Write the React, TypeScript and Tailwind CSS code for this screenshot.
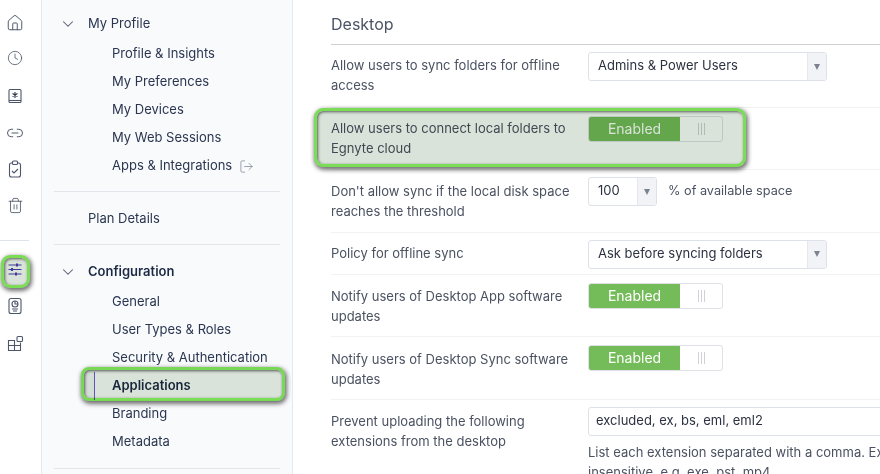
import { ChevronDown, Clock, House, Link2, LogOut, Trash2 } from "lucide-react";
import type { ReactNode } from "react";

const profileLinks = ["Profile & Insights", "My Preferences", "My Devices", "My Web Sessions"];
const configLinks = ["General", "User Types & Roles", "Security & Authentication"];

function IconCell({ children }: { children: ReactNode }) {
  return <div className="flex h-[36.6px] w-[30px] items-center justify-center text-[#4c576b]">{children}</div>;
}

function BookIcon() {
  return (
    <svg width="16" height="16" viewBox="0 0 16 16" fill="none" stroke="currentColor" strokeWidth="1.1">
      <rect x="2" y="1.5" width="12" height="13" rx="1" />
      <path d="M2 12.5h12" />
      <path d="M8 4v6M5.5 5.5l5 3M10.5 5.5l-5 3" stroke="#2a3448" />
    </svg>
  );
}

function ClipboardIcon() {
  return (
    <svg width="16" height="18" viewBox="0 0 16 18" fill="none" stroke="currentColor" strokeWidth="1.1">
      <rect x="2.5" y="3" width="11" height="14" rx="2" />
      <rect x="5.5" y="1" width="5" height="3.5" rx="1" fill="white" />
      <path d="M5 11l2 2 4-4" />
    </svg>
  );
}

function SlidersIcon() {
  return (
    <svg width="14" height="13" viewBox="0 0 14 13" fill="none" stroke="#4f3fb8" strokeWidth="1.1">
      <path d="M0.5 2h13M0.5 6.5h13M0.5 11h13" />
      <path d="M9 0.5v3M4 5v3M8 9.5v3" strokeWidth="2" />
    </svg>
  );
}

function DriveIcon() {
  return (
    <svg width="16" height="18" viewBox="0 0 16 18" fill="none" stroke="currentColor" strokeWidth="1.1">
      <rect x="2" y="1.5" width="12" height="15" rx="2" />
      <circle cx="8" cy="7" r="3" />
      <path d="M8 4v3h3M5 12h6M6 14h4" />
    </svg>
  );
}

function BlocksIcon() {
  return (
    <svg width="17" height="17" viewBox="0 0 17 17" fill="none" stroke="currentColor" strokeWidth="1.1">
      <path d="M1.5 5.5h6v10h-6zM1.5 10.5h12v5h-6" />
      <path d="M13.5 10.5v-3" />
      <rect x="10" y="1.5" width="5.5" height="5" rx="1" />
    </svg>
  );
}

function Rail() {
  return (
    <div className="w-[42px] shrink-0 border-r border-[#e4e8f0] bg-white pt-[4.5px]">
      <IconCell><House size={18} strokeWidth={1.3} /></IconCell>
      <IconCell><Clock size={16} strokeWidth={1.2} className="-mt-[2px]" /></IconCell>
      <IconCell><BookIcon /></IconCell>
      <IconCell><Link2 size={18} strokeWidth={1.3} /></IconCell>
      <IconCell><ClipboardIcon /></IconCell>
      <IconCell><Trash2 size={17} strokeWidth={1.2} /></IconCell>
      <div className="mt-[15.5px] mb-[11px] h-px w-[29px] bg-[#dfe3ea]" />
      <IconCell><SlidersIcon /></IconCell>
      <IconCell><DriveIcon /></IconCell>
      <IconCell><BlocksIcon /></IconCell>
    </div>
  );
}

function SubLink({ children }: { children: ReactNode }) {
  return <div className="flex h-7 items-center pl-[58px]">{children}</div>;
}

function GroupHead({ label, bold }: { label: string; bold?: boolean }) {
  return (
    <div className={`flex h-7 items-center ${bold ? "font-semibold text-[#1c2a44]" : ""}`}>
      <ChevronDown size={18} strokeWidth={1.4} className="ml-[5px] text-[#4d586b]" />
      <span className="ml-[11px]">{label}</span>
    </div>
  );
}

function Sidebar() {
  return (
    <div className="w-[251px] shrink-0 border-r border-[#e4e8f0] bg-[#f9fafc] pt-[10px] pl-[12px] pr-[12px] text-[13px] text-[#2a3650]">
      <GroupHead label="My Profile" />
      <div className="mt-[2px]">
        {profileLinks.map((l) => <SubLink key={l}>{l}</SubLink>)}
        <SubLink>
          Apps &amp; Integrations
          <LogOut size={15} strokeWidth={1.2} className="ml-[7px] text-[#7d8595]" />
        </SubLink>
      </div>
      <div className="mt-[11px] h-px bg-[#e1e5ec]" />
      <div className="mt-[13px] flex h-7 items-center pl-[34px]">Plan Details</div>
      <div className="mt-[11px] h-px bg-[#e1e5ec]" />
      <div className="mt-[13px]"><GroupHead label="Configuration" bold /></div>
      <div className="mt-[2px]">
        {configLinks.map((l) => <SubLink key={l}>{l}</SubLink>)}
        <div className="ml-[40px] flex h-7 items-center border-l border-[#6a63d8] bg-white pl-[17px] font-semibold text-[#1c2a44]">Applications</div>
        <SubLink>Branding</SubLink>
        <SubLink>Metadata</SubLink>
      </div>
      <div className="mt-[12px] h-px bg-[#e1e5ec]" />
    </div>
  );
}

function Caret() {
  return (
    <div className="flex w-[19px] shrink-0 items-center justify-center border-l border-[#e4e7ee] bg-[#f1f3f7]">
      <div className="h-0 w-0 border-x-[3.5px] border-t-[6px] border-x-transparent border-t-[#7b8290]" />
    </div>
  );
}

function Select({ value, width }: { value: string; width: string }) {
  return (
    <div className={`flex h-[29px] ${width} overflow-hidden rounded-[3px] border border-[#dde1e9] bg-white`}>
      <div className="flex flex-1 items-center pb-[1px] pl-[9px] text-[#2b3140]">{value}</div>
      <Caret />
    </div>
  );
}

function Toggle() {
  return (
    <div className="mt-[1px] flex h-[26px] w-[135px] overflow-hidden rounded-[3px] border border-[#dfe1e6] bg-white">
      <div className="flex w-[91px] items-center justify-center bg-[#74bb59] pb-[1px] text-[14px] text-white">Enabled</div>
      <div className="flex flex-1 items-center justify-center gap-[2px]">
        <span className="h-[12px] w-px bg-[#cfd2d8]" />
        <span className="h-[12px] w-px bg-[#cfd2d8]" />
        <span className="h-[12px] w-px bg-[#cfd2d8]" />
      </div>
    </div>
  );
}

function Row({ label, children, tall = true, pad = "pt-[3.5px]" }: { label: ReactNode; children: ReactNode; tall?: boolean; pad?: string }) {
  return (
    <div className={`flex ${tall ? "h-[62.5px]" : "h-[42px]"} border-b border-[#f1f2f5] pt-[7px]`}>
      <div className={`w-[257px] shrink-0 ${pad} pr-[8px] leading-[20px]`}>{label}</div>
      {children}
    </div>
  );
}

function Main() {
  return (
    <div className="min-w-0 flex-1 pl-[38px] text-[13px] text-[#4a5261]">
      <div className="flex h-[45px] items-end border-b border-[#cfd1d5] pb-[9px] text-[16px] leading-[22px] text-[#4a5466]">Desktop</div>
      <Row pad="pt-[3px]" label="Allow users to sync folders for offline access">
        <Select value="Admins & Power Users" width="w-[239px]" />
      </Row>
      <Row label="Allow users to connect local folders to Egnyte cloud">
        <Toggle />
      </Row>
      <Row label="Don't allow sync if the local disk space reaches the threshold">
        <Select value="100" width="w-[69px]" />
        <span className="ml-[11px] mt-[4px] text-[12.7px]">% of available space</span>
      </Row>
      <Row tall={false} label="Policy for offline sync">
        <Select value="Ask before syncing folders" width="w-[239px]" />
      </Row>
      <Row pad="pt-[4.5px]" label="Notify users of Desktop App software updates">
        <Toggle />
      </Row>
      <Row pad="pt-[4.5px]" label="Notify users of Desktop Sync software updates">
        <Toggle />
      </Row>
      <div className="flex pt-[7px]">
        <div className="w-[257px] shrink-0 pt-[4.5px] pr-[8px] leading-[20px]">Prevent uploading the following extensions from the desktop</div>
        <div className="w-[500px] shrink-0">
          <div className="flex h-[29px] items-center rounded-[3px] border border-[#dde1e9] bg-white pl-[7px] text-[#2b3140]">excluded, ex, bs, eml, eml2</div>
          <p className="mt-[6px] w-[420px] leading-[20px]">List each extension separated with a comma. Extensions are case insensitive, e.g. exe, pst, mp4.</p>
        </div>
      </div>
    </div>
  );
}

function Callout({ className }: { className: string }) {
  return (
    <div className={`pointer-events-none absolute border-[3px] border-[#7bdc56] bg-[#d9e3d9] mix-blend-multiply shadow-[inset_1px_1px_3px_rgba(50,50,50,0.75)] ${className}`} />
  );
}

function CalloutShadow({ className }: { className: string }) {
  return <div className={`pointer-events-none absolute shadow-[1px_2px_4px_1px_rgba(40,40,40,0.65)] ${className}`} />;
}

export default function App() {
  return (
    <div className="relative flex h-[474px] w-[880px] overflow-hidden bg-white font-['Inter',sans-serif]">
      <Rail />
      <Sidebar />
      <Main />
      <CalloutShadow className="left-[1px] top-[255px] h-[33px] w-[29px] rounded-[9px]" />
      <CalloutShadow className="left-[81px] top-[367px] h-[34px] w-[204px] rounded-[8px]" />
      <CalloutShadow className="left-[314px] top-[108px] h-[59px] w-[432px] rounded-[9px]" />
      <Callout className="left-[1px] top-[255px] h-[33px] w-[29px] rounded-[9px]" />
      <Callout className="left-[81px] top-[367px] h-[34px] w-[204px] rounded-[8px]" />
      <Callout className="left-[314px] top-[108px] h-[59px] w-[432px] rounded-[9px]" />
    </div>
  );
}
